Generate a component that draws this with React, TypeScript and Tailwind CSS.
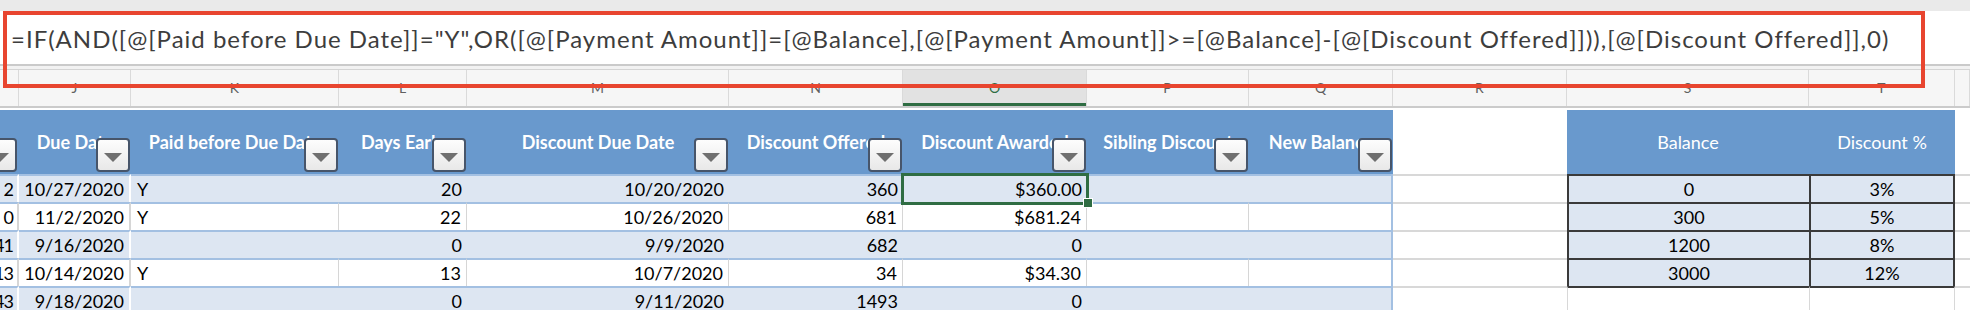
import React from 'react';

const GRID =
  'grid grid-cols-[19px_112px_208px_128px_262px_174px_184px_162px_144px_174px_242px_146px_1fr]';

const FORMULA =
  '=IF(AND([@[Paid before Due Date]]="Y",OR([@[Payment Amount]]=[@Balance],[@[Payment Amount]]>=[@Balance]-[@[Discount Offered]])),[@[Discount Offered]],0)';

const letters = ['', 'J', 'K', 'L', 'M', 'N', 'O', 'P', 'Q', 'R', 'S', 'T', ''];

const headers = [
  '',
  'Due Date',
  'Paid before Due Date',
  'Days Early',
  'Discount Due Date',
  'Discount Offered',
  'Discount Awarded',
  'Sibling Discount',
  'New Balance',
];

const rows: string[][] = [
  ['2', '10/27/2020', 'Y', '20', '10/20/2020', '360', '$360.00', '', '', '', '0', '3%'],
  ['0', '11/2/2020', 'Y', '22', '10/26/2020', '681', '$681.24', '', '', '', '300', '5%'],
  ['41', '9/16/2020', '', '0', '9/9/2020', '682', '0', '', '', '', '1200', '8%'],
  ['13', '10/14/2020', 'Y', '13', '10/7/2020', '34', '$34.30', '', '', '', '3000', '12%'],
  ['43', '9/18/2020', '', '0', '9/11/2020', '1493', '0', '', '', '', '', ''],
];

function FilterButton({ first = false }: { first?: boolean }) {
  return (
    <div
      className={`absolute bottom-[2px] ${first ? 'right-[2px]' : 'right-[1px]'} w-[34px] h-[34px] rounded-[4px] border-2 border-[#47556a] bg-gradient-to-b from-[#fdfdfd] to-[#e8e8e8] flex items-center justify-center`}
    >
      <svg width="18" height="9" viewBox="0 0 18 9" className="mt-[4px]">
        <polygon points="0,0 18,0 9,9" fill="#6f6f6f" />
      </svg>
    </div>
  );
}

function DataRow({ cells, index }: { cells: string[]; index: number }) {
  const blue = index % 2 === 0;
  const last = index === 4;
  return (
    <div className={`${GRID} h-[28px]`}>
      {cells.map((v, i) => {
        if (i <= 8) {
          const bg = blue ? 'bg-[#dde6f2]' : 'bg-white';
          let right = '';
          if (i <= 1) right = blue ? 'border-r-2 border-r-white' : 'border-r-2 border-r-[#d6d6d6]';
          else if (i === 8) right = 'border-r-2 border-r-[#a3c0e2]';
          else right = blue ? '' : 'border-r border-r-[#d6d6d6]';
          const align =
            i === 2
              ? 'justify-start pl-[6px]'
              : i === 0
              ? 'justify-end pr-[4px] tracking-[-1px]'
              : 'justify-end pr-[5px]';
          const selected = index === 0 && i === 6;
          return (
            <div
              key={i}
              className={`relative border-t-2 border-t-[#a3c0e2] ${bg} ${right} ${selected ? 'z-10' : ''}`}
            >
              <div className={`h-full w-full flex items-center overflow-hidden whitespace-nowrap ${align}`}>
                <span className="shrink-0">{v}</span>
              </div>
              {selected && (
                <>
                  <div className="absolute -left-[2px] -right-[2px] -top-[3px] -bottom-[3px] border-[3px] border-[#2f6d43] pointer-events-none" />
                  <div className="absolute -right-[6px] -bottom-[6px] w-[10px] h-[10px] bg-[#2f6d43] border border-white" />
                </>
              )}
            </div>
          );
        }
        if (i === 9) {
          return <div key={i} className="bg-white border-t-2 border-t-[#d8d8d8]" />;
        }
        if (!last) {
          return (
            <div
              key={i}
              className={`flex items-center justify-center bg-[#dde6f2] border-t-2 border-l-2 border-[#3a3a3a] ${i === 11 ? 'border-r-2' : ''}`}
            >
              {v}
            </div>
          );
        }
        return (
          <div
            key={i}
            className={`bg-white border-t-2 border-t-[#3a3a3a] border-l border-l-[#d8d8d8] ${i === 11 ? 'border-r border-r-[#d8d8d8]' : ''}`}
          />
        );
      }).concat([
        <div key="u" className="bg-white border-t-2 border-t-[#d8d8d8]" />,
      ])}
    </div>
  );
}

export default function App() {
  return (
    <div className="relative w-[1970px] h-[310px] overflow-hidden bg-white font-['Lato',sans-serif] text-black text-[18px] leading-none">
      {/* top band */}
      <div className="h-[11px] bg-[#eaeaea]" />
      {/* formula bar */}
      <div className="h-[53px] bg-white flex items-center pl-[11px] pt-[2px]">
        <span className="text-[24px] tracking-[1px] text-[#3d3d3d] whitespace-nowrap">{FORMULA}</span>
      </div>
      {/* divider */}
      <div className="h-[6px] bg-[#f2f2f2] border-t-2 border-t-[#cacaca] border-b border-b-[#d4d4d4]" />
      {/* column letters */}
      <div className={`${GRID} h-[38px] bg-[#f6f6f6] border-b-2 border-b-[#cbcbcb]`}>
        {letters.map((l, i) => (
          <div
            key={i}
            className={`relative flex items-center justify-center text-[14px] border-r border-r-[#dadada] ${
              l === 'O' ? 'bg-[#e2e2e2] text-[#2f6d43]' : 'text-[#606060]'
            }`}
          >
            {l}
            {l === 'O' && <div className="absolute left-0 right-0 bottom-0 h-[3px] bg-[#2f6d43]" />}
          </div>
        ))}
      </div>
      <div className="h-[2px] bg-white" />
      {/* table header */}
      <div className={`${GRID} h-[64px]`}>
        {headers.map((h, i) => (
          <div key={i} className="relative bg-[#6999cd] flex items-center justify-center overflow-hidden">
            <span className="text-white font-bold text-[18px] whitespace-nowrap shrink-0">{h}</span>
            <FilterButton first={i === 0} />
          </div>
        ))}
        <div className="bg-white" />
        <div className="bg-[#6999cd] flex items-center justify-center text-white text-[18px]">Balance</div>
        <div className="bg-[#6999cd] flex items-center justify-center text-white text-[18px]">Discount %</div>
        <div className="bg-white" />
      </div>
      {/* data */}
      {rows.map((r, i) => (
        <DataRow key={i} cells={r} index={i} />
      ))}
      {/* red highlight box */}
      <div className="absolute left-[3px] top-[11px] w-[1922px] h-[77px] border-4 border-[#e8452f] pointer-events-none" />
    </div>
  );
}
